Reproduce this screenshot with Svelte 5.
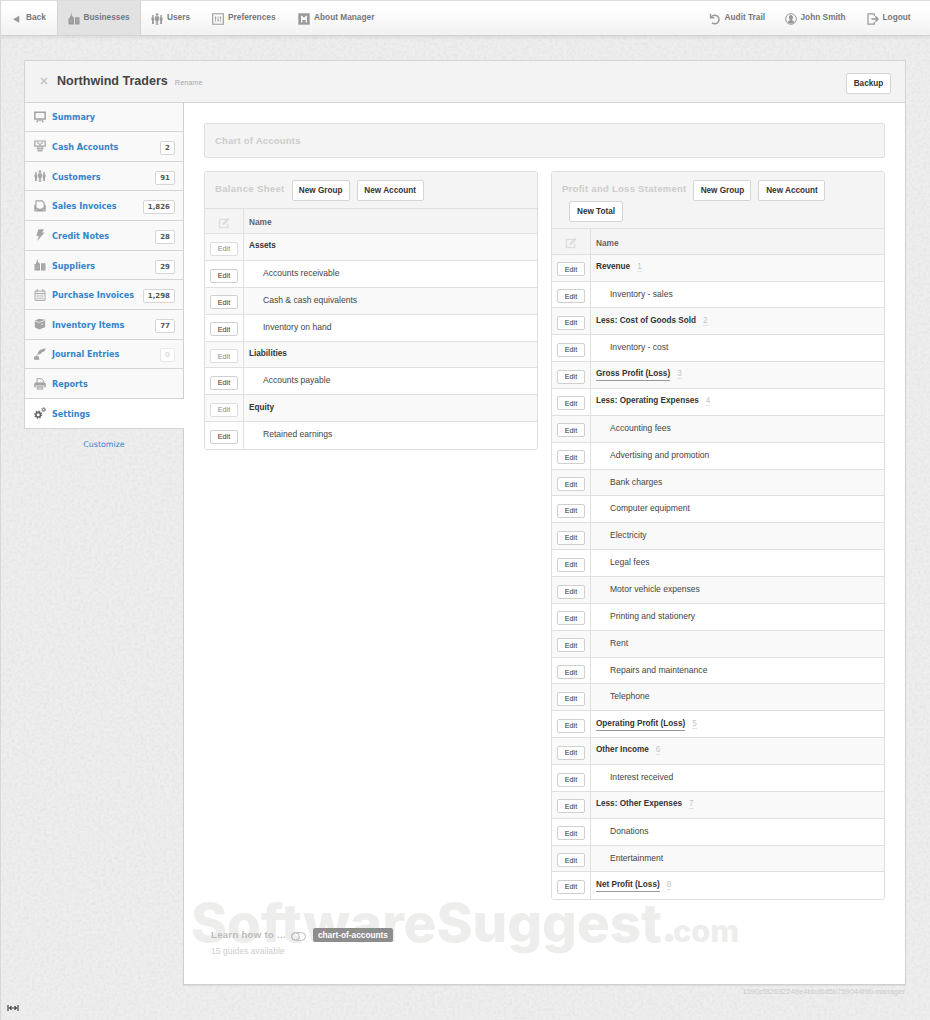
<script>
  const nav = [
    ['Back', 'back'], ['Businesses', 'building'], ['Users', 'people'],
    ['Preferences', 'sliders'], ['About Manager', 'about'], null,
    ['Audit Trail', 'undo'], ['John Smith', 'user'], ['Logout', 'logout']
  ];
  const side = [
    ['Summary', 'board'], ['Cash Accounts', 'cash', '2'], ['Customers', 'people', '91'],
    ['Sales Invoices', 'envelope', '1,826'], ['Credit Notes', 'bolt', '28'],
    ['Suppliers', 'building', '29'], ['Purchase Invoices', 'calendar', '1,298'],
    ['Inventory Items', 'box', '77'], ['Journal Entries', 'quill', '0'],
    ['Reports', 'printer'], ['Settings', 'gears']
  ];
  const balance = [
    { n: 'Assets', g: 1, off: 1 }, { n: 'Accounts receivable' }, { n: 'Cash & cash equivalents' },
    { n: 'Inventory on hand' }, { n: 'Liabilities', g: 1, off: 1 }, { n: 'Accounts payable' },
    { n: 'Equity', g: 1, off: 1 }, { n: 'Retained earnings' }
  ];
  const profit = [
    { n: 'Revenue', g: 1, i: 1 }, { n: 'Inventory - sales' },
    { n: 'Less: Cost of Goods Sold', g: 1, i: 2 }, { n: 'Inventory - cost' },
    { n: 'Gross Profit (Loss)', g: 1, t: 1, i: 3 }, { n: 'Less: Operating Expenses', g: 1, i: 4 },
    { n: 'Accounting fees' }, { n: 'Advertising and promotion' }, { n: 'Bank charges' },
    { n: 'Computer equipment' }, { n: 'Electricity' }, { n: 'Legal fees' },
    { n: 'Motor vehicle expenses' }, { n: 'Printing and stationery' }, { n: 'Rent' },
    { n: 'Repairs and maintenance' }, { n: 'Telephone' },
    { n: 'Operating Profit (Loss)', g: 1, t: 1, i: 5 }, { n: 'Other Income', g: 1, i: 6 },
    { n: 'Interest received' }, { n: 'Less: Other Expenses', g: 1, i: 7 },
    { n: 'Donations' }, { n: 'Entertainment' }, { n: 'Net Profit (Loss)', g: 1, t: 1, i: 8 }
  ];
  const panels = [
    { title: 'Balance Sheet', buttons: ['New Group', 'New Account'], rows: balance, tall: false },
    { title: 'Profit and Loss Statement', buttons: ['New Group', 'New Account', 'New Total'], rows: profit, tall: true }
  ];
</script>

{#snippet icon(name)}
  <svg class="icon" viewBox="0 0 12 12" width="12" height="12" fill="currentColor" stroke="none">
    {#if name === 'back'}
      <path d="M8.300 2.800v7L2 6.300z" />
    {:else if name === 'building'}
      <path d="M.5 11.5V5H2V3.2h.8V1.4L3.3 0l.5 1.4v1.8h.7L6 5v6.5zM7 4.3h4.5v7.2H7z" />
      <path d="M1.5 6.8h3.6M1.5 8.7h3.6M8 6h2.6M8 7.8h2.6M8 9.6h2.6" stroke="#fff" stroke-width=".5" opacity=".4" />
    {:else if name === 'people'}
      <circle cx="6" cy="1.5" r="1.3" /><circle cx="1.9" cy="2.9" r="1" /><circle cx="10.1" cy="2.9" r="1" />
      <path d="M4.1 3.3h3.8v4.1h-.7V12H6.3V8.2h-.6V12h-.9V7.4h-.7zM.5 4.3h2.8v3.2h-.5V11H1V7.5H.5zM8.7 4.3h2.8v3.2H11V11H9.2V7.5h-.5z" />
    {:else if name === 'sliders'}
      <path d="M.7.7h10.6v10.6H.7z" fill="none" stroke="currentColor" stroke-width="1.1" />
      <path d="M3.500 3.2v5.600M6 3.2v5.600M8.500 3.2v5.600M2.600 5h1.800M5.100 7h1.800M7.600 4.7h1.800" stroke="currentColor" stroke-width=".7" />
    {:else if name === 'about'}
      <path d="M.3.3h11.4v11.4H.3z" />
      <path d="M3.700 9.6V2.8M8.300 9.6V2.8M3.7 3.4L6 5.600l2.3-2.2M3.7 6.4h4.600" fill="none" stroke="#fff" stroke-width="1.300" />
    {:else if name === 'undo'}
      <path d="M2.300 3.900A4.300 4.300 0 1 1 3 9.800" fill="none" stroke="currentColor" stroke-width="1.500" />
      <path d="M.8.8v4.700h4.700V4.100L2.200 4V.8z" />
    {:else if name === 'user'}
      <circle cx="6" cy="6" r="5.3" fill="none" stroke="currentColor" stroke-width="1" />
      <path d="M6 2.1c1.5 0 2.1 1 2 2.3 0 1.1-.5 1.7-.8 2.2v.8c1 .4 1.900.6 2.300 1.400C8.600 10.100 7.400 10.600 6 10.600S3.400 10.100 2.500 8.800c.4-.8 1.300-1 2.300-1.400v-.8C4.500 6.100 4 5.500 4 4.400 3.900 3.100 4.500 2.100 6 2.100z" />
    {:else if name === 'logout'}
      <path d="M7.300 3V.8H1v10.400h6.300V9" fill="none" stroke="currentColor" stroke-width="1.200" />
      <path d="M4.500 6h6M8.300 3.300L11 6 8.300 8.700" fill="none" stroke="currentColor" stroke-width="1.400" />
    {:else if name === 'board'}
      <path d="M.9 1.300h10.200v6.800H.9z" fill="none" stroke="currentColor" stroke-width="1.500" />
      <path d="M6 8v2.500M4.500 8.600L2.600 11.400M7.500 8.600l1.900 2.800" stroke="currentColor" stroke-width="1.200" />
    {:else if name === 'cash'}
      <path d="M2.800 6.200H.8V1h10.400v5.200h-2" fill="none" stroke="currentColor" stroke-width="1.200" />
      <path d="M3.200 2.200h1.600v1.500H3.200zM7.200 2.200h1.600v1.500H7.200zM5 3.500h2v1.200H5z" />
      <path d="M2.800 5.300h6.500v3l-1 3.200H3.800l-1-3.200z" opacity=".85" />
      <path d="M3.500 7.300h5M4 9.300h4" stroke="#fff" stroke-width=".5" />
    {:else if name === 'envelope'}
      <path d="M2 6V.9h6.200L10.200 3v3" fill="none" stroke="currentColor" stroke-width="1.100" />
      <path d="M.3 4.500l2 1.300v1.500L6 9l3.800-1.700V5.800l1.900-1.300v7H.3z" />
      <path d="M.8 10.800l3-2M11.200 10.800l-3-2" stroke="#fff" stroke-width=".5" />
    {:else if name === 'bolt'}
      <path d="M4.500.3H10L8 3.600h2.700L3 12l1.900-5.200H2.200z" />
    {:else if name === 'calendar'}
      <path d="M1 2h10v9.400H1zM1 4.400h10" fill="none" stroke="currentColor" stroke-width=".9" />
      <path d="M3.200.3v2.500M8.800.3v2.500" stroke="currentColor" stroke-width="1.200" />
      <path d="M2.500 6.200h7M2.500 7.900h7M2.500 9.600h7" stroke="currentColor" stroke-width=".9" stroke-dasharray="1.200 .7" />
    {:else if name === 'box'}
      <path d="M.8 2.800L5 .8l6.200 1V9L5.500 11.400.8 9.600z" />
      <path d="M1.200 3.400l4.300 1 5.400-2M7 6.700l2.400-.9" fill="none" stroke="#fff" stroke-width=".7" />
    {:else if name === 'quill'}
      <path d="M11.800.4C7 .4 3.800 2.600 3.500 6.400c3.300 0 4-1 4.500-2.100l2.200-.9zM.3 8.300h4.300l.8 3.500H0z" />
      <path d="M2.200 9C3 6.800 4.300 5.300 7 3.500" fill="none" stroke="currentColor" stroke-width=".8" />
    {:else if name === 'printer'}
      <path d="M3 5V.7h4.600L9.300 2.400V5" fill="none" stroke="currentColor" stroke-width="1" />
      <path d="M1.300 4.500h9.400l1.100 1.200v3.600h-1.600V7.500H1.800v1.800H.2V5.700zM2.700 8.300h6.600v3.200H2.700z" />
      <path d="M3.500 9.300h5M3.500 10.400h5" stroke="#fff" stroke-width=".4" />
    {:else if name === 'gears'}
      <circle cx="4.200" cy="7.700" r="2.300" fill="none" stroke="currentColor" stroke-width="1.600" />
      <circle cx="4.200" cy="7.700" r="3.500" fill="none" stroke="currentColor" stroke-width="1.200" stroke-dasharray="1.370 1.370" />
      <circle cx="9.700" cy="2.600" r="1.200" fill="none" stroke="currentColor" stroke-width="1" />
      <circle cx="9.700" cy="2.600" r="2" fill="none" stroke="currentColor" stroke-width=".8" stroke-dasharray=".8 .77" />
    {:else if name === 'edit'}
      <path d="M8.300 2.400H1.500v8.300h8.200V6.800" fill="none" stroke="currentColor" stroke-width="1.300" />
      <path d="M4.200 8.400l.5-2.400L9.900.8l1.600 1.600-5.200 5.300z" />
    {/if}
  </svg>
{/snippet}

<div class="page">
  <svg class="grain" width="930" height="1020">
    <filter id="n" x="0" y="0" width="100%" height="100%">
      <feTurbulence type="fractalNoise" baseFrequency=".35" numOctaves="2" seed="4" />
      <feColorMatrix values="0 0 0 0 0  0 0 0 0 0  0 0 0 0 0  .08 0 0 0 -.03" />
    </filter>
    <rect width="930" height="1020" filter="url(#n)" />
  </svg>

  <nav>
    {#each nav as item}
      {#if item}
        <a class:active={item[0] === 'Businesses'} class:first={item[1] === 'back'}>{@render icon(item[1])}<span>{item[0]}</span></a>
      {:else}<i></i>{/if}
    {/each}
  </nav>

  <main>
    <header>
      <svg class="close" viewBox="0 0 8 8" width="8" height="8"><path d="M1 1l6 6M7 1L1 7" stroke="#c6c6c6" stroke-width="1.700" /></svg>
      <h1>Northwind Traders</h1>
      <small>Rename</small>
      <button class="btn">Backup</button>
    </header>
    <div class="body">
      <aside>
        {#each side as [label, ic, count]}
          <div class="tab" class:current={label === 'Settings'}>
            {@render icon(ic)}<span class="label">{label}</span>
            {#if count}<b class:zero={count === '0'}>{count}</b>{/if}
          </div>
        {/each}
        <div class="custom">Customize</div>
      </aside>
      <section>
        <svg class="mark" width="560" height="70" viewBox="0 0 560 70">
          <text x="7" y="48.500" font-size="53" textLength="471" lengthAdjust="spacingAndGlyphs">SoftwareSuggest</text>
          <text x="477" y="48.500" font-size="46">.</text>
          <text x="489" y="48.500" font-size="31" textLength="66" lengthAdjust="spacingAndGlyphs">com</text>
        </svg>
        <div class="heading">Chart of Accounts</div>
        <div class="panels">
          {#each panels as p}
            <div class="panel">
              <div class="top" class:tall={p.tall}>
                <h2>{p.title}</h2>
                {#each p.buttons as b}<button class="btn">{b}</button>{/each}
              </div>
              <div class="row head"><div class="cell pen">{@render icon('edit')}</div><div class="name">Name</div></div>
              {#each p.rows as r}
                <div class="row">
                  <div class="cell"><button class="edit" class:off={r.off}>Edit</button></div>
                  <div class="name" class:group={r.g}>
                    <span class:total={r.t}>{r.n}</span>{#if r.i}<em>{r.i}</em>{/if}
                  </div>
                </div>
              {/each}
            </div>
          {/each}
        </div>
        <div class="guides">
          <div class="learn"><span>Learn how to ...</span>
            <svg width="15" height="9" viewBox="0 0 15 9" fill="none" stroke="#bbb"><rect x=".5" y=".7" width="14" height="7.600" rx="3.800" /><circle cx="4.500" cy="4.500" r="3.800" /></svg>
            <b>chart-of-accounts</b></div>
          <p>15 guides available</p>
        </div>
      </section>
    </div>
  </main>
  <footer><svg width="12" height="8" viewBox="0 0 12 8" stroke="#444" fill="none"><path d="M1 1v6M11 1v6M2.500 4h7M4.500 2.200L2.600 4l1.900 1.800M7.500 2.200L9.400 4 7.500 5.800" stroke-width="1.200" /></svg><span>1590cf82632248e4bbd6d5b759044f9b.manager</span></footer>
</div>

<style>
  :global(body) { margin: 0; background: #ececec; }
  .page, .page * { box-sizing: border-box; }
  .page { position: relative; width: 930px; height: 1020px; overflow: hidden; background: #eee; font-family: "Liberation Sans", Arial, sans-serif; font-size: 8.55px; color: #444; border-left: 1px solid #d8d8d8; }
  .grain { position: absolute; inset: 0; }
  .icon { flex: none; display: block; }
  nav { position: relative; margin-left: -1px; height: 36px; display: grid; grid-template-columns: 57px 83.5px 61px 86px 96px 1fr 76px 82px 74px; background: linear-gradient(#fff 20%, #f1f1f1); border-top: 1px solid #ddd; border-bottom: 1px solid #d2d2d2; box-shadow: 0 1px 4px rgba(0,0,0,.1); font-size: 8.300px; font-weight: bold; color: #777; }
  nav a { display: flex; padding: 11px 0 0 10.500px; gap: 4px; color: #999; }
  nav a.first { gap: 3.500px; }
  nav span { color: #777; line-height: 11px; white-space: nowrap; }
  nav .active { background: #e2e2e2; border-left: 1px solid #d2d2d2; border-right: 1px solid #d2d2d2; padding-left: 9.500px; }
  nav :global(.icon) { margin-top: 1px; }
  main { position: relative; margin: 24px 0 0 23px; width: 882px; height: 924.500px; display: flex; flex-direction: column; }
  header { height: 42.500px; flex: none; background: #f3f3f3; border: 1px solid #d4d4d4; display: flex; align-items: center; padding: 0 14px 0 15px; }
  .close { margin-right: 9px; }
  h1 { margin: 0; font-size: 12.550px; line-height: 14px; color: #444; }
  small { font-size: 7.300px; color: #aaa; margin-left: 7px; padding-top: 3px; }
  header .btn { margin: 4px 0 0 auto; width: 45px; }
  .btn { font: bold 8.200px "Liberation Sans", Arial, sans-serif; color: #333; height: 21px; padding: 0; background: #fff; border: 1px solid #d4d4d4; border-radius: 2px; }
  .body { display: flex; flex: 1; min-height: 0; }
  aside { width: 159px; flex: none; position: relative; z-index: 1; }
  .tab { height: 29.650px; background: #f9f9f9; border-bottom: 1px solid #d4d4d4; border-left: 1px solid #d4d4d4; display: flex; align-items: center; padding: 0 8px 0 9px; color: #a3a3a3; font-family: "DejaVu Sans", Verdana, sans-serif; }
  .tab .label { font-size: 8.080px; font-weight: bold; color: #3584ca; margin: 1px auto 0 6px; white-space: nowrap; }
  .tab b { height: 14px; min-width: 15px; padding: 0 4px; margin-top: 3px; border: 1px solid #d6d6d6; border-radius: 2px; background: #fff; font-size: 7px; line-height: 13px; color: #555; text-align: center; }
  .tab b.zero { color: #ddd; border-color: #e8e8e8; }
  .tab.current { background: #fff; color: #666; margin-right: -1px; }
  .custom { text-align: center; color: #3584ca; font: 7.900px "DejaVu Sans", Verdana, sans-serif; padding: 11.500px 0 0 1px; }
  section { flex: 1; background: #fff; padding: 20px 20px 0; position: relative; border: 1px solid #d0d0d0; border-top: 0; box-shadow: 0 1px 1px rgba(0,0,0,.06); }
  .heading { height: 35px; border: 1px solid #e0e0e0; border-radius: 2px; background: #f4f4f4; color: #ccc; font-weight: bold; font-size: 9.500px; letter-spacing: .22px; line-height: 34px; padding-left: 10px; }
  .panels { display: grid; grid-template-columns: 334px 334px; justify-content: space-between; align-items: start; margin-top: 13px; }
  .panel { border: 1px solid #dedede; border-radius: 3px; overflow: hidden; position: relative; }
  .top { height: 37px; background: #f4f4f4; border-bottom: 1px solid #e0e0e0; display: flex; flex-wrap: wrap; align-content: flex-start; padding: 8.500px 11px 0 10px; }
  .top.tall { height: 57.500px; }
  h2 { margin: 0; font-size: 9.500px; line-height: 17px; letter-spacing: .27px; color: #ccc; }
  .top:not(.tall) h2 { letter-spacing: .36px; }
  .top .btn { margin-left: 7px; width: 58px; }
  .top .btn:nth-of-type(2) { width: 67px; }
  .top .btn:nth-of-type(3) { width: 54px; }
  .row { height: 26.860px; display: flex; border-bottom: 1px solid #e0e0e0; background: #fff; }
  .row:nth-child(odd) { background: #f9f9f9; }
  .row:last-child { border-bottom: 0; height: 26.500px; }
  .row.head { height: 25.700px; background: #f4f4f4; }
  .cell { width: 39px; flex: none; border-right: 1px solid #e0e0e0; padding: 7.500px 0 0 5px; }
  .pen { padding: 8px 0 0 13px; color: #ddd; }
  .edit { display: block; width: 28px; height: 14px; padding: 0; border: 1px solid #d0d0d0; border-radius: 2px; background: #fff; color: #333; font: 7.200px/11px "Liberation Sans", Arial, sans-serif; }
  .edit.off { color: #888; border-color: #dedede; }
  .name { padding: 6px 0 0 19px; line-height: 12px; }
  .group { font-weight: bold; padding: 6.300px 0 0 5px; color: #333; font-size: 8.200px; }
  .head .name { padding: 7.500px 0 0 5px; font-weight: bold; color: #666; font-size: 8.300px; }
  .group span { display: inline-block; }
  .group .total { border-bottom: 1px solid #999; }
  em { font: 8.200px/10px "Liberation Sans", Arial, sans-serif; color: #c4c4c4; border-bottom: 1px solid #e2e2e2; margin-left: 7px; }
  .guides { margin: 28px 0 0 7px; position: relative; }
  .learn { display: flex; align-items: center; height: 14px; font-size: 9.500px; font-weight: bold; letter-spacing: .33px; color: #bbb; }
  .learn svg { margin: 4px 7px 0 5px; }
  .learn b { width: 80px; height: 14px; border-radius: 2px; background: #8d8d8d; color: #fff; font-size: 8.300px; line-height: 14px; letter-spacing: 0; text-align: center; }
  p { margin: 4px 0 0; font-size: 8.400px; color: #ccc; letter-spacing: .1px; line-height: 10px; }
  .mark { position: absolute; left: 0; top: 790px; overflow: visible; fill: #ededec; font-family: "Inter", sans-serif; font-weight: 800; }
  footer { position: relative; display: flex; justify-content: space-between; align-items: flex-start; padding: 2px 25px 0 6px; color: #cbcbcb; font-size: 7.600px; }
  footer svg { margin-top: 17px; }
</style>
